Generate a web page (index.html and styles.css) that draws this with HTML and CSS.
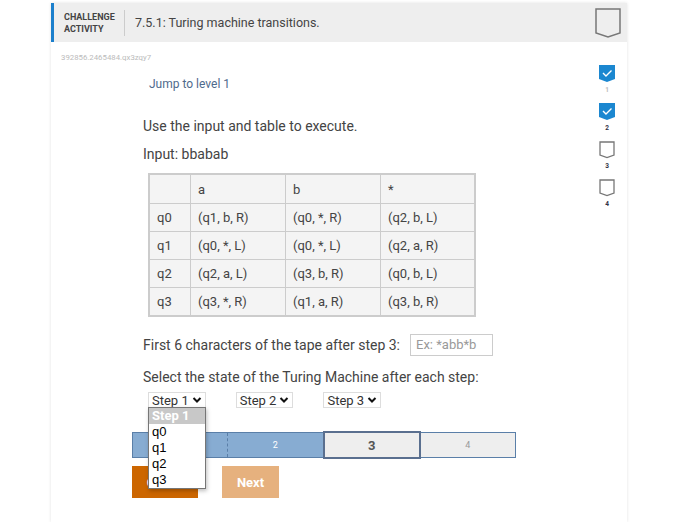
FILE: index.html
```html
<!DOCTYPE html>
<html lang="en">
<head>
    <meta charset="UTF-8">
    <meta name="viewport" content="width=device-width, initial-scale=1.0">
    <title>Turing machine transitions</title>
    <link rel="stylesheet" href="styles.css">
</head>
<body>
    <div class="card">
        <div class="header">
            <div class="label">Challenge<br>Activity</div>
            <div class="title">7.5.1: Turing machine transitions.</div>
            <svg class="badge" width="26" height="30" viewBox="0 0 26 30">
                <path d="M1 1 H25 V25 L13 29 L1 25 Z" fill="none" stroke="#777" stroke-width="1.5"/>
            </svg>
        </div>

        <div class="body">
            <div class="main">
                <div class="seed">392856.2465484.qx3zqy7</div>
                <div class="jump">Jump to level 1</div>

                <div class="activity">
                    <p class="line first">Use the input and table to execute.</p>
                    <p class="line">Input: bbabab</p>

                    <table class="rules">
                        <tr><td></td><td>a</td><td>b</td><td>*</td></tr>
                        <tr><td>q0</td><td>(q1, b, R)</td><td>(q0, *, R)</td><td>(q2, b, L)</td></tr>
                        <tr><td>q1</td><td>(q0, *, L)</td><td>(q0, *, L)</td><td>(q2, a, R)</td></tr>
                        <tr><td>q2</td><td>(q2, a, L)</td><td>(q3, b, R)</td><td>(q0, b, L)</td></tr>
                        <tr><td>q3</td><td>(q3, *, R)</td><td>(q1, a, R)</td><td>(q3, b, R)</td></tr>
                    </table>

                    <div class="tape-row">
                        <span>First 6 characters of the tape after step 3:</span>
                        <span class="tape-input">Ex: *abb*b</span>
                    </div>

                    <p class="line select-label">Select the state of the Turing Machine after each step:</p>

                    <div class="selects">
                        <div class="select-wrap">
                            <div class="select">Step 1
                                <svg width="10" height="8" viewBox="0 0 10 8"><path d="M1.5 2 L5 5.5 L8.5 2" fill="none" stroke="#111" stroke-width="2"/></svg>
                            </div>
                            <div class="dropdown">
                                <div class="option selected">Step 1</div>
                                <div class="option">q0</div>
                                <div class="option">q1</div>
                                <div class="option">q2</div>
                                <div class="option">q3</div>
                            </div>
                        </div>
                        <div class="select-wrap">
                            <div class="select">Step 2
                                <svg width="10" height="8" viewBox="0 0 10 8"><path d="M1.5 2 L5 5.5 L8.5 2" fill="none" stroke="#111" stroke-width="2"/></svg>
                            </div>
                        </div>
                        <div class="select-wrap">
                            <div class="select">Step 3
                                <svg width="10" height="8" viewBox="0 0 10 8"><path d="M1.5 2 L5 5.5 L8.5 2" fill="none" stroke="#111" stroke-width="2"/></svg>
                            </div>
                        </div>
                    </div>
                </div>

                <div class="progress">
                    <div class="seg done">1</div>
                    <div class="seg done dashed">2</div>
                    <div class="seg current">3</div>
                    <div class="seg">4</div>
                </div>

                <div class="buttons">
                    <button class="check">Check</button>
                    <button class="next">Next</button>
                </div>
            </div>

            <div class="levels">
                <div class="level">
                    <svg width="16" height="18" viewBox="0 0 16 18">
                        <path d="M0 0 H16 V14 L8 17 L0 14 Z" fill="#1b87d0"/>
                        <path d="M4 8 L7 11 L12.5 5.5" fill="none" stroke="#fff" stroke-width="1.4"/>
                    </svg>
                    <span class="num pale">1</span>
                </div>
                <div class="level">
                    <svg width="16" height="18" viewBox="0 0 16 18">
                        <path d="M0 0 H16 V14 L8 17 L0 14 Z" fill="#1b87d0"/>
                        <path d="M4 8 L7 11 L12.5 5.5" fill="none" stroke="#fff" stroke-width="1.4"/>
                    </svg>
                    <span class="num">2</span>
                </div>
                <div class="level">
                    <svg width="16" height="18" viewBox="0 0 16 18">
                        <path d="M1 1 H15 V14 L8 16.5 L1 14 Z" fill="none" stroke="#777" stroke-width="1.3"/>
                    </svg>
                    <span class="num">3</span>
                </div>
                <div class="level">
                    <svg width="16" height="18" viewBox="0 0 16 18">
                        <path d="M1 1 H15 V14 L8 16.5 L1 14 Z" fill="none" stroke="#777" stroke-width="1.3"/>
                    </svg>
                    <span class="num">4</span>
                </div>
            </div>
        </div>
    </div>
</body>
</html>
```

FILE: styles.css
```css
body {
    margin: 0;
    background: #fff;
    font-family: Roboto, "Liberation Sans", sans-serif;
    color: #333;
}

.card {
    margin: 3px 0 0 51px;
    width: 576px;
    height: 519px;
    background: #fff;
    box-shadow: 0 0 3px rgba(0, 0, 0, 0.12);
}

.header {
    display: flex;
    align-items: center;
    height: 39px;
    background: #eee;
    border-left: 3px solid #1b7fcc;
}

.label {
    width: 50px;
    padding: 0 10px;
    font-size: 9px;
    line-height: 12px;
    font-weight: 700;
    text-transform: uppercase;
    color: #444;
    border-right: 1px solid #ccc;
    height: 26px;
    display: flex;
    align-items: center;
}

.title {
    flex: 1;
    padding-left: 10px;
    font-size: 12.5px;
    color: #444;
}

.badge {
    margin-right: 6px;
    margin-top: 1px;
}

.body {
    display: flex;
}

.main {
    flex: 1;
}

.seed {
    margin: 11px 0 0 10px;
    font-size: 7.8px;
    line-height: 10px;
    color: #bbb;
}

.jump {
    margin: 13px 0 0 98px;
    font-size: 12px;
    line-height: 16px;
    color: #4f6a8c;
}

.activity {
    margin-left: 92px;
}

.line {
    margin: 8px 0 0;
    font-size: 14px;
    line-height: 20px;
    color: #444;
}

.line.first {
    margin-top: 24px;
}

.rules {
    margin: 9px 0 0 5px;
    border-collapse: collapse;
    background: #f4f4f4;
    border: 2px solid #ccc;
    font-size: 13px;
    color: #444;
}

.rules td {
    border: 1px solid #ccc;
    height: 27px;
    padding: 0 7px;
}

.rules tr:first-child td {
    height: 28px;
}

.rules td:nth-child(1) { width: 26px; }
.rules td:nth-child(2) { width: 80px; }
.rules td:nth-child(3) { width: 80px; }
.rules td:nth-child(4) { width: 79px; }

.tape-row {
    display: flex;
    align-items: center;
    margin-top: 17px;
    font-size: 14px;
    color: #444;
}

.tape-input {
    margin-left: 10px;
    width: 76px;
    height: 20px;
    line-height: 20px;
    padding-left: 5px;
    border: 1px solid #ccc;
    color: #999;
    font-size: 13px;
}

.select-label {
    margin-top: 11px;
}

.selects {
    display: flex;
    gap: 30px;
    margin: 5px 0 0 5px;
}

.select-wrap {
    position: relative;
}

.select {
    display: flex;
    align-items: center;
    gap: 3px;
    height: 14px;
    padding: 0 3px;
    border: 1px solid #ddd;
    font-size: 13px;
    color: #333;
}

.dropdown {
    position: absolute;
    top: 15px;
    left: 0;
    width: 56px;
    background: #fff;
    border: 1px solid #767676;
    box-shadow: 1px 2px 4px rgba(0, 0, 0, 0.25);
    font-family: "Liberation Sans", Arial, sans-serif;
    font-size: 13px;
    z-index: 2;
}

.option {
    height: 16px;
    line-height: 16px;
    padding-left: 3px;
    color: #000;
}

.option.selected {
    background: #c8c8c8;
    color: #fff;
    font-weight: 700;
    font-family: Roboto, sans-serif;
}

.progress {
    display: flex;
    margin: 24px 0 0 81px;
    width: 382px;
    height: 24px;
    border: 1px solid #5a7fa8;
}

.seg {
    flex: 1;
    display: flex;
    align-items: center;
    justify-content: center;
    font-size: 9px;
    color: #999;
    background: #eee;
}

.seg.done {
    background: #87acd2;
    color: #fff;
}

.seg.dashed {
    border-left: 1px dashed #5a7fa8;
}

.seg.current {
    margin: -2px 0;
    border: 2px solid #5a6f8f;
    font-size: 13px;
    font-weight: 700;
    color: #555;
}

.buttons {
    display: flex;
    gap: 24px;
    margin: 8px 0 0 81px;
}

button {
    height: 32px;
    border: none;
    font-family: Roboto, sans-serif;
    font-size: 13px;
    font-weight: 700;
    color: #fff;
}

.check {
    width: 66px;
    background: #cc6600;
}

.next {
    width: 57px;
    background: #e6b17e;
}

.levels {
    width: 36px;
    padding-top: 23px;
    display: flex;
    flex-direction: column;
    align-items: center;
    margin-right: 2px;
}

.level {
    display: flex;
    flex-direction: column;
    align-items: center;
    height: 38px;
}

.num {
    font-size: 6.5px;
    line-height: 8px;
    margin-top: 3px;
    color: #334;
    font-weight: 700;
}

.num.pale {
    color: #bbb;
}
```
